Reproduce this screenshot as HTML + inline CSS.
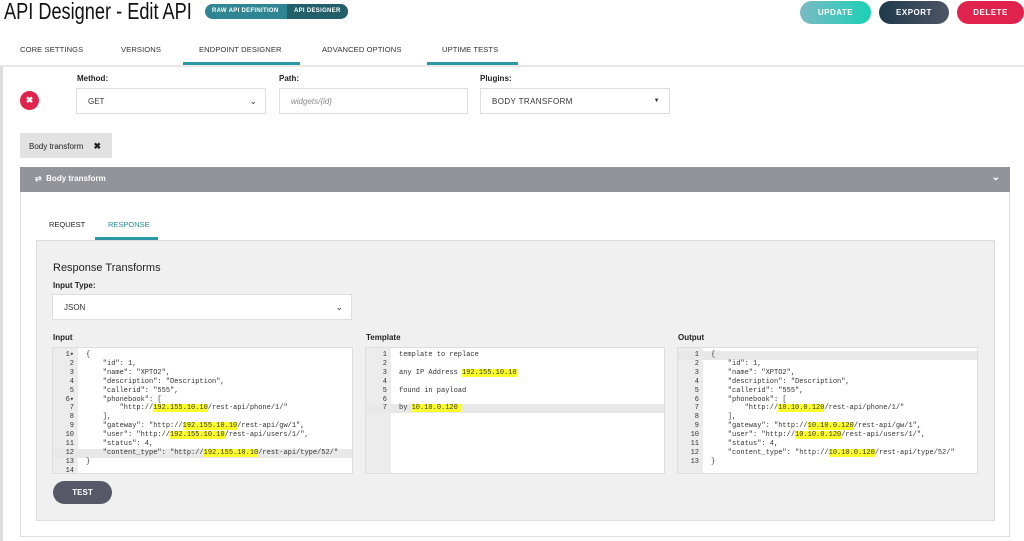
<!DOCTYPE html>
<html><head><meta charset="utf-8"><style>
*{box-sizing:border-box;margin:0;padding:0}
body{width:1024px;height:541px;overflow:hidden;background:#fff;font-family:"Liberation Sans",sans-serif;position:relative;color:#222}
.a{position:absolute}
.btn{position:absolute;top:1px;height:23px;border-radius:12px;color:#fff;font-size:8px;font-weight:bold;letter-spacing:.5px;display:flex;align-items:center;justify-content:center}
.tab{position:absolute;top:45px;font-size:7.6px;color:#333;letter-spacing:.1px}
.lbl{position:absolute;font-size:8px;font-weight:bold;color:#222}
.inp{position:absolute;background:#fff;border:1px solid #ddd;font-size:8px;color:#333;display:flex;align-items:center;padding-left:11px}
.ed{position:absolute;background:#fff;border:1px solid #ddd;overflow:hidden}
.gut{position:absolute;left:0;top:0;bottom:0;width:25px;background:#ececec}
.code{position:absolute;left:0;right:0;top:3px;font-family:"Liberation Mono",monospace;font-size:7px;line-height:8.9px;white-space:pre;color:#333}
.ln{display:inline-block;width:21px;text-align:right;margin-right:12px;color:#333}
.h{background:#ffff2a}
.cur{background:#e8e8e8;display:block}
</style></head><body>
<div class="a" style="left:0;top:66px;width:3px;height:475px;background:#ddd"></div>
<div class="a" style="left:4px;top:-2px;font-size:23px;color:#111;transform:scaleX(0.79);transform-origin:0 0;white-space:nowrap">API Designer - Edit API</div>
<div class="a" style="left:205px;top:4px;width:143px;height:15px;border-radius:8px;background:#2f8592;overflow:hidden;font-size:6px;font-weight:bold;color:#fff;letter-spacing:.3px">
<div class="a" style="left:7px;top:4px">RAW API DEFINITION</div>
<div class="a" style="left:82px;top:0;width:61px;height:15px;background:#235f69"></div>
<div class="a" style="left:89px;top:4px">API DESIGNER</div></div>
<div class="btn" style="left:800px;width:71px;background:linear-gradient(90deg,#7bbac5,#19d1b5)">UPDATE</div>
<div class="btn" style="left:879px;width:70px;background:linear-gradient(90deg,#1e3a4c,#4f5566)">EXPORT</div>
<div class="btn" style="left:957px;width:67px;background:#e0234d">DELETE</div>
<div class="tab" style="left:20px">CORE SETTINGS</div>
<div class="tab" style="left:121px">VERSIONS</div>
<div class="tab" style="left:199px">ENDPOINT DESIGNER</div>
<div class="tab" style="left:322px">ADVANCED OPTIONS</div>
<div class="tab" style="left:442px">UPTIME TESTS</div>
<div class="a" style="left:183px;top:62px;width:117px;height:3px;background:#2a97a3"></div>
<div class="a" style="left:427px;top:62px;width:91px;height:3px;background:#2a97a3"></div>
<div class="a" style="left:0;top:65px;width:1024px;height:2px;background:#e8e8e8"></div>
<div class="a" style="left:20px;top:91px;width:19px;height:19px;border-radius:50%;background:#e0234d;color:#fff;font-size:9px;font-weight:bold;text-align:center;line-height:19px">✖</div>
<div class="lbl" style="left:77px;top:74px">Method:</div>
<div class="inp" style="left:76px;top:88px;width:190px;height:26px">GET<span class="a" style="right:8px;top:7px;font-size:9px">&#8964;</span></div>
<div class="lbl" style="left:279px;top:74px">Path:</div>
<div class="inp" style="left:279px;top:88px;width:189px;height:26px;color:#888;font-style:italic">widgets/{id}</div>
<div class="lbl" style="left:480px;top:74px">Plugins:</div>
<div class="inp" style="left:480px;top:88px;width:190px;height:26px;letter-spacing:.4px">BODY TRANSFORM<span class="a" style="right:9px;top:9px;font-size:6px">▼</span></div>
<div class="a" style="left:20px;top:133px;width:92px;height:25px;background:#e2e2e2;font-size:8px;padding:8px 0 0 9px">Body transform <b style="margin-left:8px;font-size:9px">✖</b></div>
<div class="a" style="left:20px;top:167px;width:990px;height:370px;border:1px solid #ddd;background:#fff"></div>
<div class="a" style="left:20px;top:167px;width:990px;height:25px;background:#93939b;color:#fff;font-size:8px;font-weight:bold;padding:7px 0 0 15px">⇄&nbsp; Body transform<span class="a" style="right:10px;top:5px;font-size:10px">&#8964;</span></div>
<div class="a" style="left:49px;top:220px;font-size:7.5px;color:#222">REQUEST</div>
<div class="a" style="left:108px;top:220px;font-size:7.5px;color:#2a8a96">RESPONSE</div>
<div class="a" style="left:95px;top:237px;width:63px;height:3px;background:#2a97a3"></div>
<div class="a" style="left:36px;top:240px;width:959px;height:281px;background:#f0f0f0;border:1px solid #ddd"></div>
<div class="a" style="left:53px;top:262px;font-size:11px;color:#222">Response Transforms</div>
<div class="lbl" style="left:53px;top:281px">Input Type:</div>
<div class="inp" style="left:52px;top:294px;width:300px;height:26px">JSON<span class="a" style="right:8px;top:7px;font-size:9px">&#8964;</span></div>
<div class="lbl" style="left:53px;top:333px">Input</div>
<div class="lbl" style="left:366px;top:333px">Template</div>
<div class="lbl" style="left:678px;top:333px">Output</div>
<div class="ed" style="left:52px;top:347px;width:301px;height:127px"><div class="gut"></div><div class="code"><span class="ln">1▾</span>{
<span class="ln">2</span>    "id": 1,
<span class="ln">3</span>    "name": "XPTO2",
<span class="ln">4</span>    "description": "Description",
<span class="ln">5</span>    "callerid": "555",
<span class="ln">6▾</span>    "phonebook": [
<span class="ln">7</span>        "http://<span class="h">192.155.10.10</span>/rest-api/phone/1/"
<span class="ln">8</span>    ],
<span class="ln">9</span>    "gateway": "http://<span class="h">192.155.10.10</span>/rest-api/gw/1",
<span class="ln">10</span>    "user": "http://<span class="h">192.155.10.10</span>/rest-api/users/1/",
<span class="ln">11</span>    "status": 4,
<span class="cur"><span class="ln">12</span>    "content_type": "http://<span class="h">192.155.10.10</span>/rest-api/type/52/"</span><span class="ln">13</span>}
<span class="ln">14</span></div></div>
<div class="ed" style="left:365px;top:347px;width:300px;height:127px"><div class="gut"></div><div class="code"><span class="ln">1</span>template to replace
<span class="ln">2</span>
<span class="ln">3</span>any IP Address <span class="h">192.155.10.10</span>
<span class="ln">4</span>
<span class="ln">5</span>found in payload
<span class="ln">6</span>
<span class="cur"><span class="ln">7</span>by <span class="h">10.10.0.120 </span></span></div></div>
<div class="ed" style="left:677px;top:347px;width:301px;height:127px"><div class="gut"></div><div class="code"><span class="cur"><span class="ln">1</span>{</span><span class="ln">2</span>    "id": 1,
<span class="ln">3</span>    "name": "XPTO2",
<span class="ln">4</span>    "description": "Description",
<span class="ln">5</span>    "callerid": "555",
<span class="ln">6</span>    "phonebook": [
<span class="ln">7</span>        "http://<span class="h">10.10.0.120</span>/rest-api/phone/1/"
<span class="ln">8</span>    ],
<span class="ln">9</span>    "gateway": "http://<span class="h">10.10.0.120</span>/rest-api/gw/1",
<span class="ln">10</span>    "user": "http://<span class="h">10.10.0.120</span>/rest-api/users/1/",
<span class="ln">11</span>    "status": 4,
<span class="ln">12</span>    "content_type": "http://<span class="h">10.10.0.120</span>/rest-api/type/52/"
<span class="ln">13</span>}</div></div>
<div class="a" style="left:53px;top:481px;width:59px;height:23px;border-radius:12px;background:#575767;color:#fff;font-size:8px;font-weight:bold;text-align:center;line-height:23px">TEST</div>
</body></html>
